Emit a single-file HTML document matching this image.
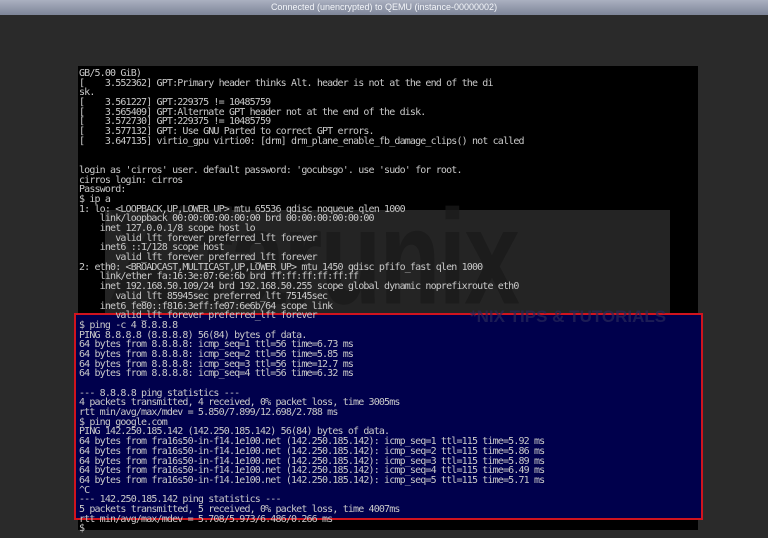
<!DOCTYPE html>
<html><head><meta charset="utf-8"><style>
html,body{margin:0;padding:0}
body{width:768px;height:538px;background:#2a2a2a;position:relative;overflow:hidden;font-family:"Liberation Mono",monospace}
.bar{position:absolute;left:0;top:0;width:768px;height:15px;background:linear-gradient(#aab0c0,#7d8598);color:#f4f6fa;font:9px "Liberation Sans",sans-serif;text-align:center;line-height:15px}
.term{position:absolute;left:78px;top:66px;width:620px;height:464px;background:#000}
.wm{position:absolute;left:105px;top:210px;width:565px;height:122px;background:rgba(120,120,120,0.3)}
.wmt{position:absolute;left:108px;top:190px;font:bold 100px "Liberation Sans",sans-serif;line-height:100px;color:rgba(25,25,25,0.75);letter-spacing:-2px;transform:scale(1,1.35);transform-origin:0 0;z-index:1}
.wms{position:absolute;left:470px;top:307px;font:bold 17px "Liberation Sans",sans-serif;color:rgba(40,40,90,0.7);z-index:3}
.box{position:absolute;left:74px;top:313px;width:625px;height:203px;border:2px solid #d0141e;background:#00004c;z-index:1}
pre{position:absolute;left:79px;top:69px;margin:0;font-size:10px;line-height:9.69px;letter-spacing:-0.85px;color:#c9c9c9;white-space:pre;z-index:2}
</style></head><body>
<div class="bar">Connected (unencrypted) to QEMU (instance-00000002)</div>
<div class="term"></div>
<div class="wm"></div>
<div class="wmt">Xifarunix</div>
<div class="box"></div>
<div class="wms">*NIX TIPS &amp; TUTORIALS</div>
<pre>GB/5.00 GiB)
[    3.552362] GPT:Primary header thinks Alt. header is not at the end of the di
sk.
[    3.561227] GPT:229375 != 10485759
[    3.565409] GPT:Alternate GPT header not at the end of the disk.
[    3.572730] GPT:229375 != 10485759
[    3.577132] GPT: Use GNU Parted to correct GPT errors.
[    3.647135] virtio_gpu virtio0: [drm] drm_plane_enable_fb_damage_clips() not called


login as 'cirros' user. default password: 'gocubsgo'. use 'sudo' for root.
cirros login: cirros
Password:
$ ip a
1: lo: &lt;LOOPBACK,UP,LOWER_UP&gt; mtu 65536 qdisc noqueue qlen 1000
    link/loopback 00:00:00:00:00:00 brd 00:00:00:00:00:00
    inet 127.0.0.1/8 scope host lo
       valid_lft forever preferred_lft forever
    inet6 ::1/128 scope host
       valid_lft forever preferred_lft forever
2: eth0: &lt;BROADCAST,MULTICAST,UP,LOWER_UP&gt; mtu 1450 qdisc pfifo_fast qlen 1000
    link/ether fa:16:3e:07:6e:6b brd ff:ff:ff:ff:ff:ff
    inet 192.168.50.109/24 brd 192.168.50.255 scope global dynamic noprefixroute eth0
       valid_lft 85945sec preferred_lft 75145sec
    inet6 fe80::f816:3eff:fe07:6e6b/64 scope link
       valid_lft forever preferred_lft forever
$ ping -c 4 8.8.8.8
PING 8.8.8.8 (8.8.8.8) 56(84) bytes of data.
64 bytes from 8.8.8.8: icmp_seq=1 ttl=56 time=6.73 ms
64 bytes from 8.8.8.8: icmp_seq=2 ttl=56 time=5.85 ms
64 bytes from 8.8.8.8: icmp_seq=3 ttl=56 time=12.7 ms
64 bytes from 8.8.8.8: icmp_seq=4 ttl=56 time=6.32 ms

--- 8.8.8.8 ping statistics ---
4 packets transmitted, 4 received, 0% packet loss, time 3005ms
rtt min/avg/max/mdev = 5.850/7.899/12.698/2.788 ms
$ ping google.com
PING 142.250.185.142 (142.250.185.142) 56(84) bytes of data.
64 bytes from fra16s50-in-f14.1e100.net (142.250.185.142): icmp_seq=1 ttl=115 time=5.92 ms
64 bytes from fra16s50-in-f14.1e100.net (142.250.185.142): icmp_seq=2 ttl=115 time=5.86 ms
64 bytes from fra16s50-in-f14.1e100.net (142.250.185.142): icmp_seq=3 ttl=115 time=5.89 ms
64 bytes from fra16s50-in-f14.1e100.net (142.250.185.142): icmp_seq=4 ttl=115 time=6.49 ms
64 bytes from fra16s50-in-f14.1e100.net (142.250.185.142): icmp_seq=5 ttl=115 time=5.71 ms
^C
--- 142.250.185.142 ping statistics ---
5 packets transmitted, 5 received, 0% packet loss, time 4007ms
rtt min/avg/max/mdev = 5.708/5.973/6.486/0.266 ms
$</pre>
</body></html>
